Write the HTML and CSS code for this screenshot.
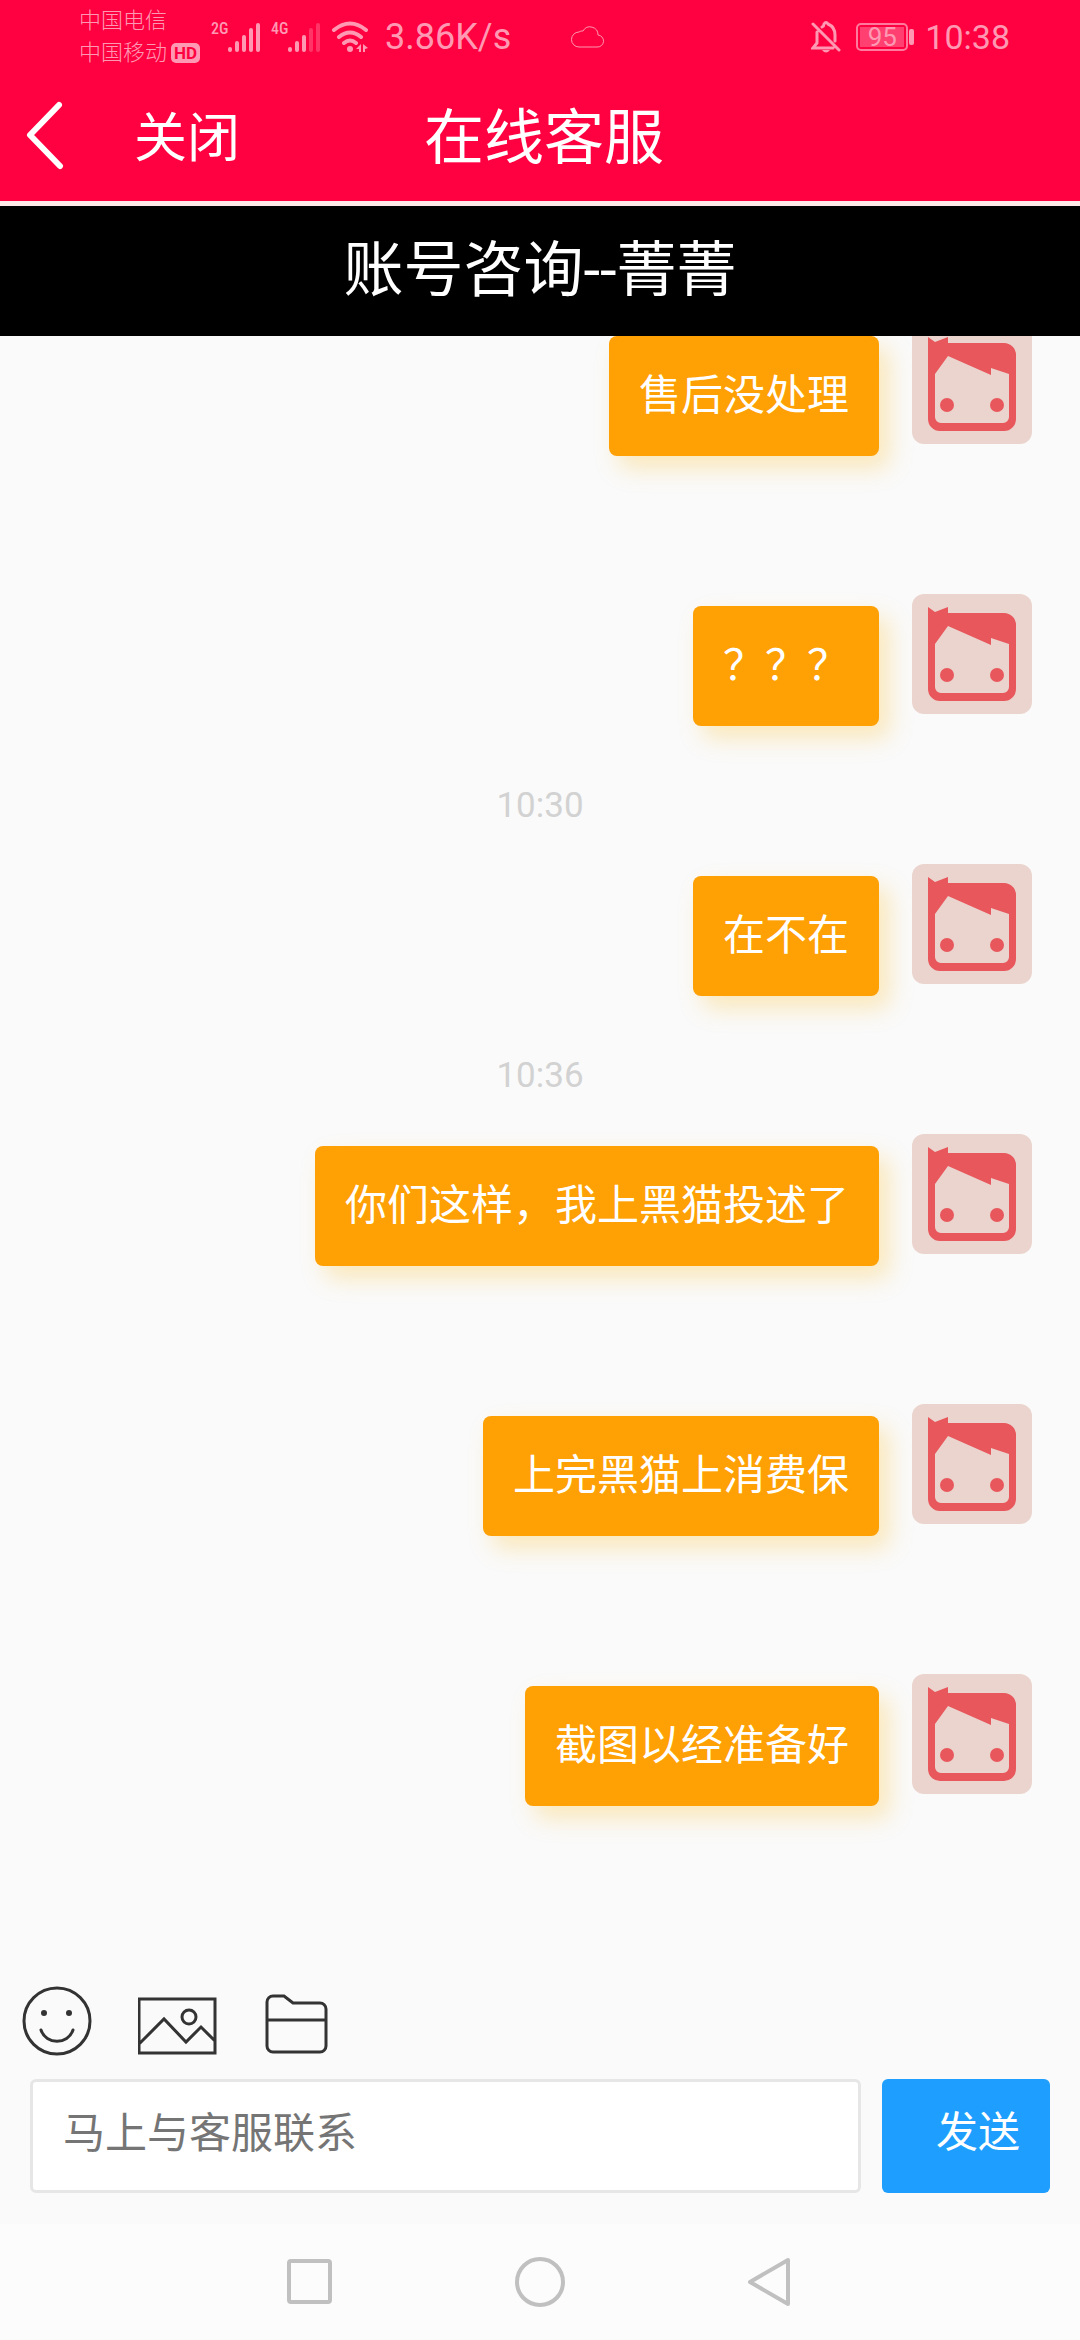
FILE: index.html
```
<!DOCTYPE html>
<html lang="zh-CN">
<head>
<meta charset="utf-8">
<meta name="viewport" content="width=device-width, initial-scale=1">
<title>在线客服</title>
<link rel="stylesheet" href="styles.css">
</head>
<body>
<svg class="defs" aria-hidden="true">
  <symbol id="avatar" viewBox="0 0 120 120">
    <path fill="#e8575c" fill-rule="evenodd" d="M16 13l7 5 13-5v6h56a12 12 0 0 1 12 12v64a12 12 0 0 1-12 12H28a12 12 0 0 1-12-12zM23 50v43a6 6 0 0 0 6 6h62a6 6 0 0 0 6-6V50l-18-6v7L36 32z"/>
    <circle cx="35" cy="81" r="7" fill="#e8575c"/>
    <circle cx="85" cy="81" r="7" fill="#e8575c"/>
  </symbol>
</svg>

<div class="app">
  <header class="top">
    <div class="status">
      <div class="carriers">
        <span>中国电信</span>
        <span class="carrier">中国移动 <b class="hd">HD</b></span>
      </div>
      <div class="signal">
        <span class="net">2G</span>
        <svg width="34" height="32" viewBox="0 0 34 32"><g stroke="currentColor" stroke-width="4" stroke-linecap="round"><path d="M3 28v1M10 22v7M17 16v13M24 9v20M31 4v25"/></g></svg>
      </div>
      <div class="signal">
        <span class="net">4G</span>
        <svg width="34" height="32" viewBox="0 0 34 32"><g stroke="currentColor" stroke-width="4" stroke-linecap="round"><path d="M3 28v1M10 22v7M17 16v13"/><path opacity=".35" d="M24 9v20M31 4v25"/></g></svg>
      </div>
      <svg class="wifi" width="38" height="32" viewBox="0 0 38 32"><g fill="none" stroke="currentColor" stroke-width="4" stroke-linecap="round"><path d="M3 9q16-13 32 0M8 16q11-9 22 0M13 22q6-5 12 0"/></g><circle cx="19" cy="28" r="3" fill="currentColor"/><path fill="currentColor" d="M30 23v8h-2v-3h-3zM32 23v8h2v-3l3-1z"/></svg>
      <span class="speed">3.86K/s</span>
      <svg class="cloud" width="34" height="24" viewBox="0 0 34 24"><path fill="none" stroke="currentColor" d="M8 22h18a6 6 0 0 0 1-12 8 8 0 0 0-15-4 5 5 0 0 0-4 1 7 7 0 0 0 0 15z"/></svg>
      <svg class="bell" width="30" height="34" viewBox="0 0 30 34"><g fill="none" stroke="currentColor" stroke-width="3" stroke-linecap="round"><path d="M2 4l26 26M6 12v11l-4 5h20M11 7q2-1 2-3 2-3 4 0 7 3 7 11v6"/></g><path fill="currentColor" d="M11 30h8q-4 5-8 0z"/></svg>
      <div class="battery"><span>95</span></div>
      <span class="clock">10:38</span>
    </div>
    <nav class="bar">
      <button class="back" type="button" aria-label="返回"><svg width="40" height="70" viewBox="0 0 40 70"><path fill="none" stroke="#fff" stroke-width="6" stroke-linecap="round" stroke-linejoin="round" d="M33 5L4 35l30 31"/></svg></button>
      <button class="close" type="button">关闭</button>
      <h1 class="title">在线客服</h1>
    </nav>
  </header>
  <h2 class="agent">账号咨询--菁菁</h2>

  <main class="chat">
    <div class="message"><p class="bubble">售后没处理</p><svg class="avatar"><use href="#avatar"/></svg></div>
    <time class="stamp"></time>
    <div class="message"><p class="bubble">？？？</p><svg class="avatar"><use href="#avatar"/></svg></div>
    <time class="stamp">10:30</time>
    <div class="message"><p class="bubble">在不在</p><svg class="avatar"><use href="#avatar"/></svg></div>
    <time class="stamp">10:36</time>
    <div class="message"><p class="bubble">你们这样，我上黑猫投述了</p><svg class="avatar"><use href="#avatar"/></svg></div>
    <time class="stamp"></time>
    <div class="message"><p class="bubble">上完黑猫上消费保</p><svg class="avatar"><use href="#avatar"/></svg></div>
    <time class="stamp"></time>
    <div class="message"><p class="bubble">截图以经准备好</p><svg class="avatar"><use href="#avatar"/></svg></div>
  </main>

  <form class="composer">
    <div class="tools">
      <button type="button" aria-label="表情"><svg width="70" height="70" viewBox="0 0 70 70"><circle cx="35" cy="35" r="33"/><path d="M19 44c5 15 27 15 32 0" stroke-linecap="round"/><g fill="#333" stroke="none"><circle cx="22" cy="27" r="3"/><circle cx="47" cy="27" r="3"/></g></svg></button>
      <button type="button" aria-label="图片"><svg width="80" height="70" viewBox="0 0 80 70"><path d="M1 13h76v54H1zM1 58l25-25 22 23 15-15 14 14"/><circle cx="51" cy="31" r="7"/></svg></button>
      <button type="button" aria-label="文件"><svg width="64" height="70" viewBox="0 0 64 70"><path d="M3 16a6 6 0 0 1 6-6h11l9 7h27a6 6 0 0 1 6 6v37a6 6 0 0 1-6 6H9a6 6 0 0 1-6-6zM3 34h59"/></svg></button>
    </div>
    <div class="entry">
      <input class="field" type="text" placeholder="马上与客服联系" aria-label="消息">
      <button class="send" type="submit">发送</button>
    </div>
  </form>

  <nav class="system">
    <button type="button" aria-label="最近任务"><svg width="50" height="50" viewBox="0 0 50 50"><rect x="4" y="4" width="41" height="41" rx="2"/></svg></button>
    <button type="button" aria-label="主屏幕"><svg width="50" height="50" viewBox="0 0 50 50"><circle cx="25" cy="25" r="23"/></svg></button>
    <button type="button" aria-label="返回"><svg width="50" height="50" viewBox="0 0 50 50"><path stroke-linejoin="round" d="M43 3v44L5 25z"/></svg></button>
  </nav>
</div>
</body>
</html>
```
FILE: styles.css
```
* { box-sizing: border-box; }

body {
  margin: 0;
  background: #fafafa;
  font-family: Roboto, "Noto Sans CJK SC", sans-serif;
}

h1, h2, p { margin: 0; font-weight: 400; }

button {
  padding: 0;
  border: 0;
  background: none;
  color: inherit;
  font: inherit;
}

svg { display: block; flex: none; }

.defs { display: none; }

.app {
  display: flex;
  flex-direction: column;
  min-height: 100vh;
}

.top {
  background: #ff0040;
  color: #fff;
}

.status {
  display: flex;
  align-items: center;
  height: 72px;
  padding: 2px 70px 0 79px;
  color: #ff99b3;
}

.carriers {
  display: flex;
  flex-direction: column;
  width: 132px;
  font-size: 22px;
  line-height: 32px;
  font-weight: 300;
  white-space: nowrap;
}

.carrier { display: flex; align-items: center; gap: 4px; }

.hd {
  padding: 0 3px;
  border-radius: 5px;
  background: #ff99b3;
  color: #ff0040;
  font-size: 17px;
  line-height: 20px;
  font-weight: 700;
}

.signal { display: flex; width: 60px; }

.net {
  width: 16px;
  font-family: "Roboto Condensed", Roboto, sans-serif;
  font-size: 16px;
  line-height: 16px;
  font-weight: 500;
}

.wifi { margin-right: 16px; }

.speed { font-size: 36px; line-height: 40px; }

.cloud { margin-left: 60px; }

.bell { margin-left: auto; }

.battery {
  position: relative;
  width: 52px;
  height: 28px;
  margin: 0 17px 0 15px;
  padding: 2px;
  border: 2px solid #ff7a9c;
  border-radius: 5px;
  font-size: 26px;
  line-height: 20px;
  text-align: center;
}

.battery span { display: block; background: #ff4070; }

.battery::after {
  content: "";
  position: absolute;
  top: 4px;
  right: -8px;
  width: 5px;
  height: 16px;
  border-radius: 2px;
  background: #ff99b3;
}

.clock { font-size: 34px; line-height: 40px; }

.bar {
  display: grid;
  grid-template-columns: 108px 1fr auto 1fr 100px;
  align-items: center;
  height: 129px;
  padding-bottom: 3px;
}

.back { padding-left: 26px; }

.close {
  padding: 8px 0 0 26px;
  font-size: 53px;
  line-height: 72px;
  text-align: left;
}

.title {
  padding-top: 8px;
  font-size: 60px;
  line-height: 72px;
}

.agent {
  border-top: 5px solid #ffe9e9;
  background: #000;
  color: #fff;
  font-size: 60px;
  line-height: 130px;
  text-align: center;
}

.chat {
  flex: 1;
  overflow: hidden;
  padding: 0 48px;
}

.message {
  display: flex;
  justify-content: flex-end;
  gap: 33px;
  height: 120px;
}

.bubble {
  padding: 30px;
  border-radius: 8px;
  background: #ffa004;
  box-shadow: 10px 12px 24px rgba(255, 180, 0, .26);
  color: #fff;
  font-size: 42px;
  line-height: 60px;
}

.avatar {
  width: 120px;
  height: 120px;
  margin-top: -12px;
  border-radius: 12px;
  background: #ebd4ce;
}

.stamp {
  display: block;
  height: 150px;
  padding-top: 56px;
  color: #d2d2d2;
  font-size: 35px;
  line-height: 48px;
  text-align: center;
}

.composer { padding: 0 30px 31px; }

.tools {
  display: flex;
  gap: 46px;
  margin: 0 -8px 23px;
}

.tools svg { fill: none; stroke: #333; stroke-width: 3; }

.entry { display: flex; gap: 21px; }

.field {
  flex: 1;
  min-width: 0;
  height: 114px;
  padding: 0 30px 6px;
  border: 3px solid #e6e6e6;
  border-radius: 6px;
  background: #fff;
  font: 42px/60px Roboto, "Noto Sans CJK SC", sans-serif;
}

.field::placeholder { color: #757575; opacity: 1; }

.send {
  padding: 0 30px 6px 54px;
  border-radius: 6px;
  background: #1e9fff;
  color: #fff;
  font-size: 42px;
  line-height: 60px;
}

.system {
  display: flex;
  justify-content: center;
  gap: 180px;
  height: 116px;
  background: #fcfcfc;
}

.system svg { fill: none; stroke: #c0c0c0; stroke-width: 4; }
```
